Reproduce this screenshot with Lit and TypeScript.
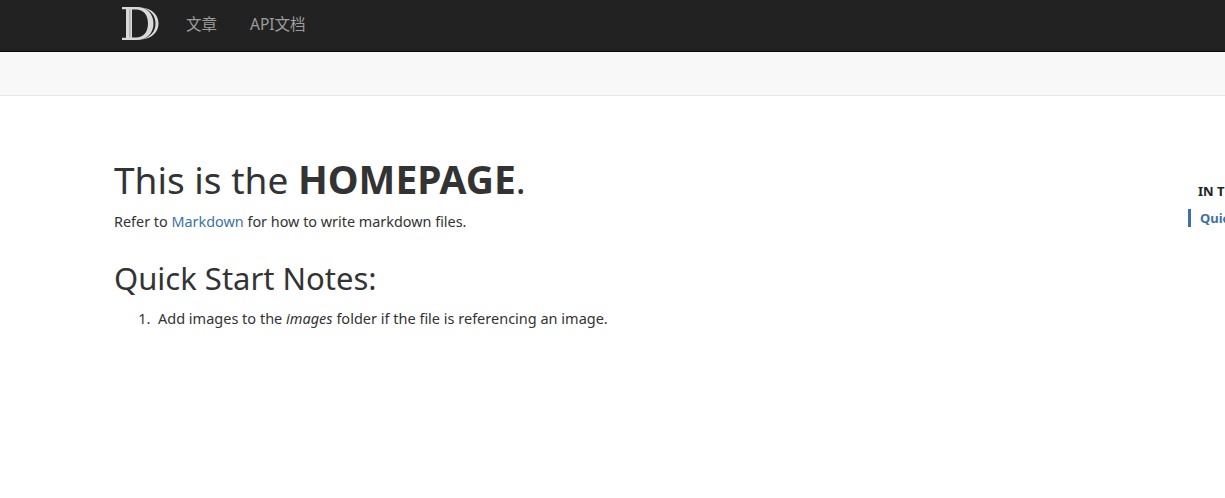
import { LitElement, html, css } from "lit";
import { customElement } from "lit/decorators.js";

@customElement("app-root")
export class AppRoot extends LitElement {
  static styles = css`
    :host {
      display: block;
      height: 498px;
      overflow: hidden;
      background: #fff;
      color: #333;
      font-family: "Noto Sans", "Noto Sans CJK SC", sans-serif;
      font-size: 14.5px;
    }
    .nav {
      background: #222;
      border-bottom: 1px solid #080808;
      display: flex;
      align-items: center;
      padding: 0 0 5px 120px;
      height: 46px;
    }
    .logo { width: 40px; height: 38px; margin: 2px 26px 0 0; display: block; }
    .nav a { color: #9d9d9d; font-size: 15.5px; margin-right: 33px; }
    .crumbs {
      height: 43px;
      background: #f8f8f8;
      border-bottom: 1px solid #e7e7e7;
    }
    .page {
      display: flex;
      justify-content: space-between;
      padding-left: 114px;
    }
    .main { padding-top: 60px; }
    h1 { font-size: 37px; font-weight: 400; line-height: 46px; margin: 0 0 9px; }
    h1 b { font-weight: 700; font-size: 39px; }
    p { margin: 0; line-height: 20px; font-size: 14.4px; }
    a.link { color: #3d72a6; text-decoration: none; }
    h2 { font-size: 31px; font-weight: 400; line-height: 40px; margin: 26px 0 10px; }
    ol { margin: 0; padding-left: 44px; line-height: 20px; }
    li::marker { content: "1.\\00a0\\00a0"; }
    .toc { width: 37px; overflow: hidden; padding-top: 86px; white-space: nowrap; }
    .toc-title { font-size: 13px; font-weight: 700; color: #222; padding-left: 10px; line-height: 18px; }
    .toc-link {
      margin-top: 9px;
      border-left: 3px solid #3d72a6;
      padding-left: 9px;
      font-size: 13px;
      font-weight: 700;
      color: #3d72a6;
      line-height: 18px;
    }
  `;

  render() {
    return html`
      <div class="nav">
        <svg class="logo" viewBox="0 0 40 38" aria-label="logo">
          <path fill="#d9d9d9" fill-rule="evenodd" d="M2 2H17C27 2 33.500 9 33.500 18.500C33.500 28 27 35 17 35H2V32.800H6V4.200H2ZM12 4.500V32.500H16C23.500 32.500 28 27 28 18.500C28 10 23.500 4.500 16 4.500Z" />
          <path fill="#d9d9d9" d="M22 2.500C32 3.500 38.500 10 38.500 18.500C38.500 27 32 33.500 22 34.500C30 32 35.500 27 35.500 18.500C35.500 10 30 5 22 2.500Z" />
          <path fill="#8a8a8a" d="M9.500 4.500h.8v28h-.8z" />
        </svg>
        <a>文章</a>
        <a>API文档</a>
      </div>
      <div class="crumbs"></div>
      <div class="page">
        <div class="main">
          <h1>This is the <b>HOMEPAGE</b>.</h1>
          <p>Refer to <a class="link">Markdown</a> for how to write markdown files.</p>
          <h2>Quick Start Notes:</h2>
          <ol><li>Add images to the <em>images</em> folder if the file is referencing an image.</li></ol>
        </div>
        <div class="toc">
          <div class="toc-title">IN THIS ARTICLE</div>
          <div class="toc-link">Quick Start Notes:</div>
        </div>
      </div>
    `;
  }
}
